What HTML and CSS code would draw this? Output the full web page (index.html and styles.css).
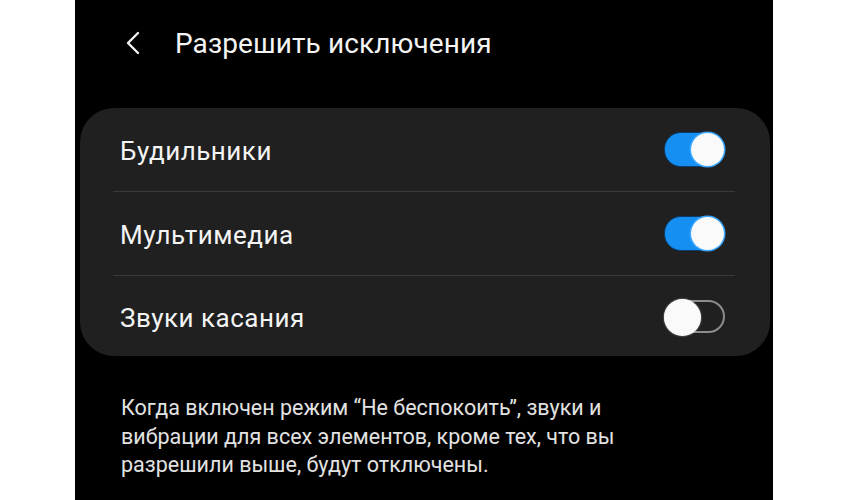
FILE: index.html
```html
<!DOCTYPE html>
<html lang="ru">
<head>
    <meta charset="UTF-8">
    <meta name="viewport" content="width=device-width, initial-scale=1.0">
    <title>Разрешить исключения</title>
    <link rel="stylesheet" href="styles.css">
</head>
<body>
    <div class="screen">
        <!-- Заголовок -->
        <div class="top-bar">
            <a href="#" class="back">
                <svg width="20" height="24" viewBox="0 0 20 24">
                    <polyline points="15,2 5,12 15,22" fill="none" stroke="#f2f2f2" stroke-width="2.4" stroke-linecap="round" stroke-linejoin="round"/>
                </svg>
            </a>
            <h1>Разрешить исключения</h1>
        </div>

        <!-- Список исключений -->
        <div class="card">
            <div class="row">
                <span class="label">Будильники</span>
                <span class="switch on"><span class="knob"></span></span>
            </div>
            <div class="row">
                <span class="label">Мультимедиа</span>
                <span class="switch on"><span class="knob"></span></span>
            </div>
            <div class="row">
                <span class="label">Звуки касания</span>
                <span class="switch"><span class="knob"></span></span>
            </div>
        </div>

        <p class="hint">Когда включен режим “Не беспокоить”, звуки и<br>вибрации для всех элементов, кроме тех, что вы<br>разрешили выше, будут отключены.</p>
    </div>
</body>
</html>
```

FILE: styles.css
```css
* {
    box-sizing: border-box;
    margin: 0;
    padding: 0;
    font-family: Roboto, 'Noto Sans', sans-serif;
}
body {
    background: #fff;
    margin: 0;
}
.screen {
    margin-left: 75px;
    width: 698px;
    height: 500px;
    background-color: #000;
    color: #f4f4f4;
    overflow: hidden;
}
.top-bar {
    display: flex;
    align-items: center;
    height: 86px;
    padding-left: 48px;
}
.back {
    display: flex;
    width: 52px;
}
.top-bar h1 {
    font-size: 28px;
    font-weight: 400;
    letter-spacing: 0.1px;
}
.card {
    margin: 22px 3px 0 5px;
    background-color: #202020;
    border-radius: 34px;
    padding: 0 35px 0 33px;
}
.row {
    display: flex;
    align-items: center;
    justify-content: space-between;
    height: 84px;
    padding: 0 10px 0 7px;
    border-bottom: 1px solid #3a3a3a;
}
.row:last-child {
    border-bottom: none;
    height: 80px;
}
.label {
    font-size: 26px;
    letter-spacing: 0.5px;
    padding-top: 3px;
}
.switch {
    position: relative;
    display: block;
    width: 61px;
    height: 33px;
    border-radius: 17px;
    border: 2px solid #8c8c8c;
}
.switch .knob {
    position: absolute;
    top: -3px;
    left: -2px;
    width: 37px;
    height: 37px;
    border-radius: 50%;
    background: #fafafa;
    box-shadow: 0 0 2px rgba(255, 255, 255, 0.6);
}
.switch.on {
    height: 35px;
    background-color: #1590f2;
    border: 1px solid #0a3c6c;
}
.switch.on .knob {
    top: 0;
    left: auto;
    right: 0;
    width: 33px;
    height: 33px;
    box-shadow: 0 0 0 1.5px #3aa6ff;
}
.hint {
    margin: 38px 0 0 46px;
    font-size: 21.5px;
    line-height: 28.5px;
    color: #e2e2e2;
}
```
